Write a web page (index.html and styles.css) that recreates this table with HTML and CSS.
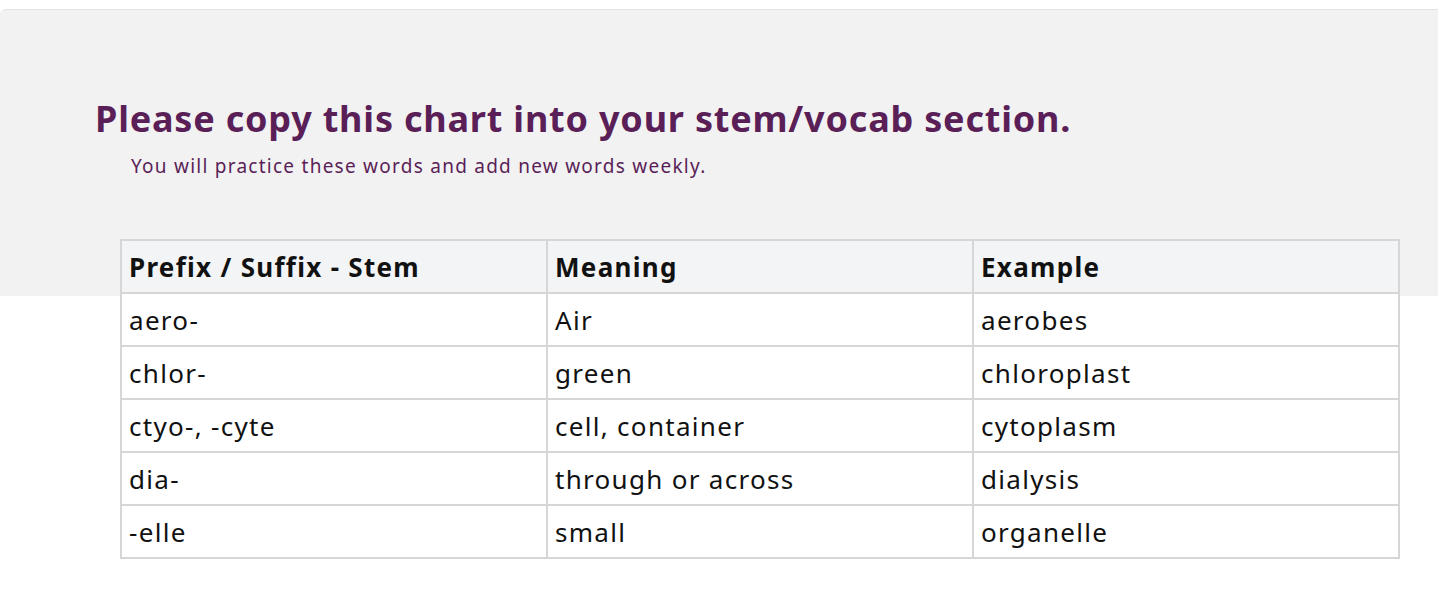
FILE: index.html
```html
<!DOCTYPE html>
<html lang="en">
<head>
<meta charset="utf-8">
<title>Stem / Vocab chart</title>
<link rel="stylesheet" href="styles.css">
</head>
<body>
<main class="page">
  <section class="panel">
    <h1 class="title">Please copy this chart into your stem/vocab section.</h1>
    <p class="subtitle">You will practice these words and add new words weekly.</p>
    <table class="chart">
      <thead>
        <tr><th>Prefix / Suffix - Stem</th><th>Meaning</th><th>Example</th></tr>
      </thead>
      <tbody>
        <tr><td>aero-</td><td>Air</td><td>aerobes</td></tr>
        <tr><td>chlor-</td><td>green</td><td>chloroplast</td></tr>
        <tr><td>ctyo-, -cyte</td><td>cell, container</td><td>cytoplasm</td></tr>
        <tr><td>dia-</td><td>through or across</td><td>dialysis</td></tr>
        <tr><td>-elle</td><td>small</td><td>organelle</td></tr>
      </tbody>
    </table>
  </section>
</main>
</body>
</html>
```

FILE: styles.css
```css
html, body {
  margin: 0;
  padding: 0;
  background: #ffffff;
}
body {
  font-family: "Noto Sans", "DejaVu Sans", sans-serif;
}
.page {
  padding-top: 9px;
}
.panel {
  border-top: 1px solid #e3e3e3;
  border-top-left-radius: 6px;
  background: linear-gradient(#f2f2f3 0, #f2f2f3 286px, #ffffff 286px);
  padding: 86px 38px 40px 95px;
}
.title {
  margin: 0;
  font-size: 36px;
  font-weight: 700;
  line-height: 46px;
  letter-spacing: 0.8px;
  color: #5a1f57;
}
.subtitle {
  margin: 11px 0 0 36px;
  font-size: 19px;
  line-height: 26px;
  letter-spacing: 1.25px;
  color: #5a1f57;
}
.chart {
  margin: 60px 0 0 25px;
  width: 1280px;
  border-collapse: collapse;
  table-layout: fixed;
  border: 2px solid #d6d6d6;
  color: #111111;
}
.chart th,
.chart td {
  border: 2px solid #d6d6d6;
  padding: 0 7px;
  height: 51px;
  text-align: left;
  font-size: 26px;
  line-height: 30px;
  letter-spacing: 1.3px;
}
.chart th {
  background: #f3f4f5;
  font-weight: 700;
}
.chart td {
  background: #ffffff;
  font-weight: 400;
}
```
